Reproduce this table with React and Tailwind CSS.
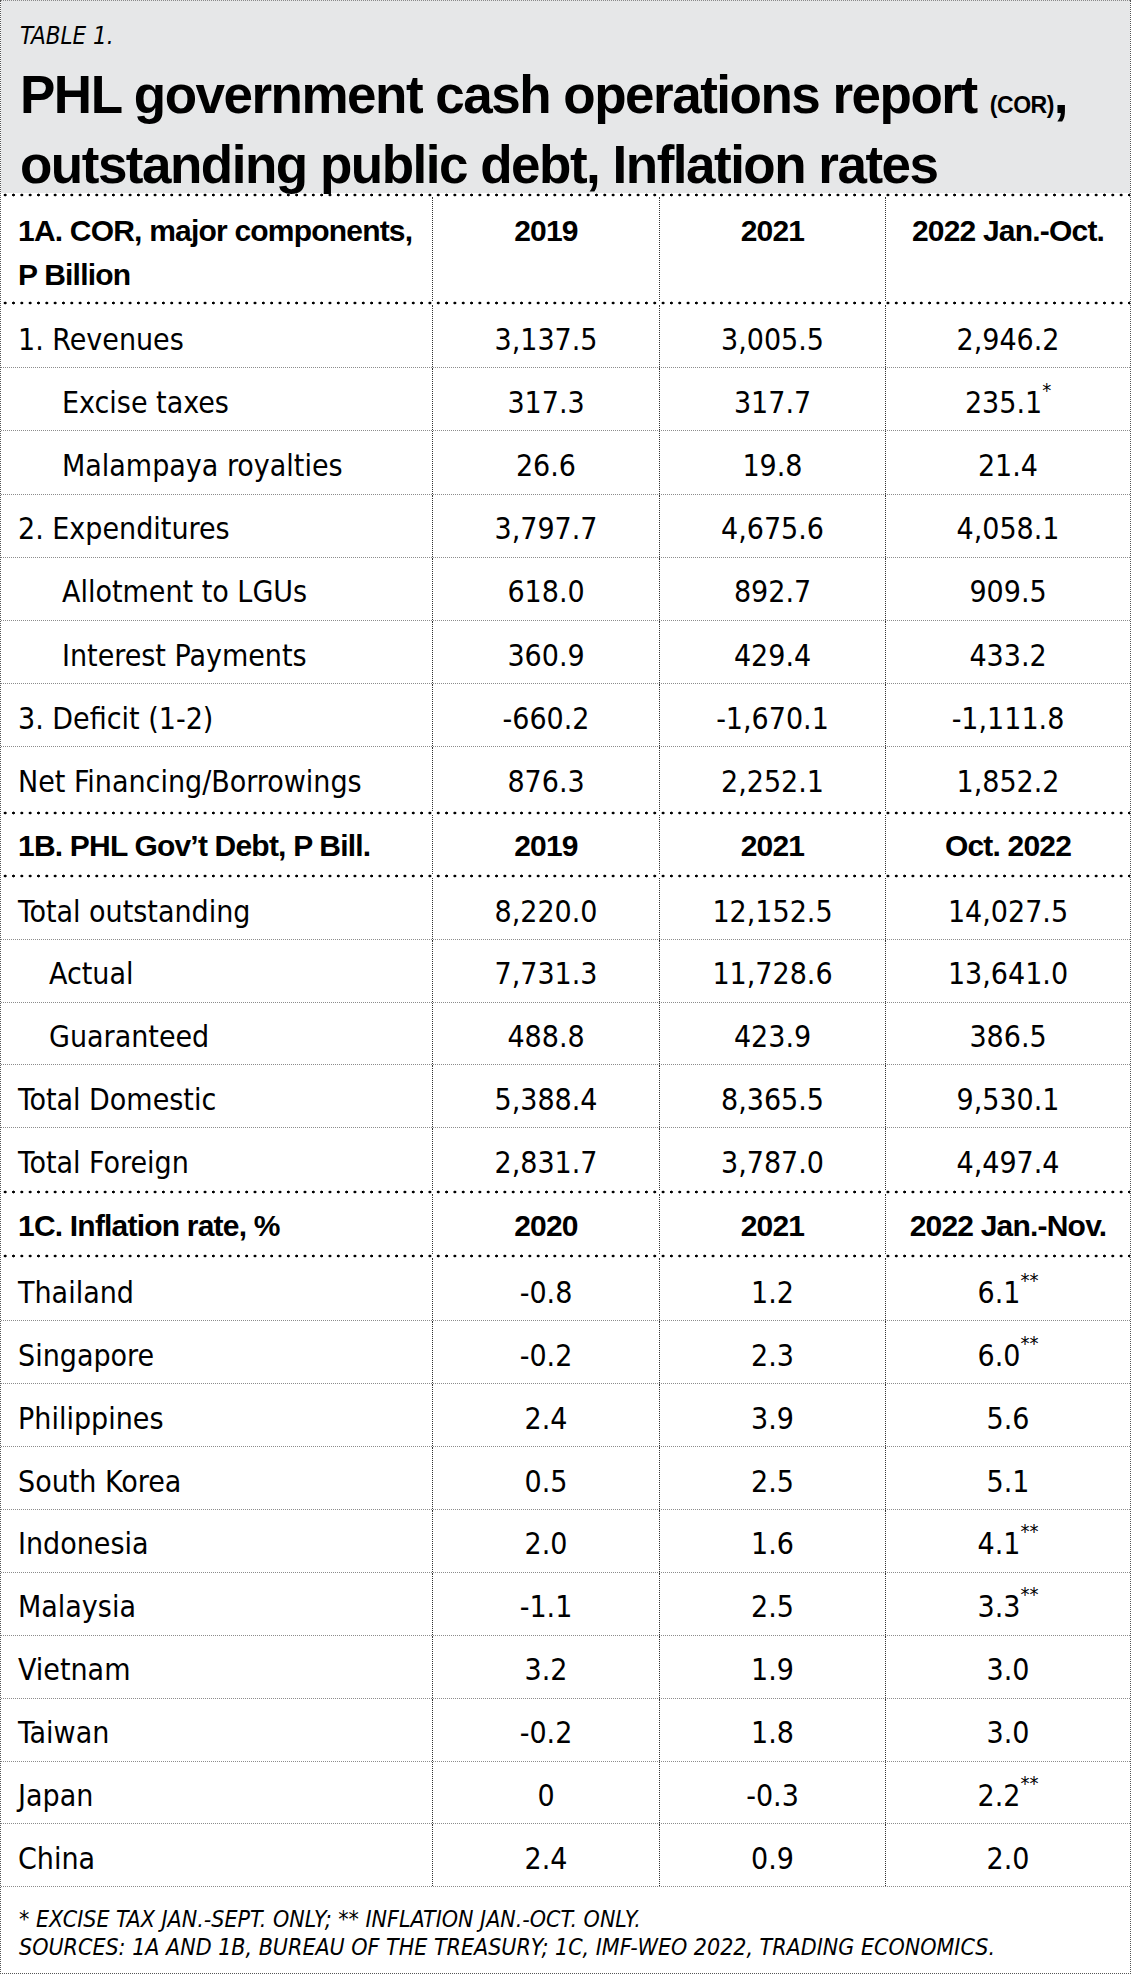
import React from 'react';

const bodyFont = { fontFamily: '"DejaVu Sans Condensed", "Liberation Sans", sans-serif' };
const boldFont = { fontFamily: '"Liberation Sans", Arial, sans-serif' };

const sectionA = [
  { label: '1. Revenues', values: ['3,137.5', '3,005.5', '2,946.2'] },
  { label: 'Excise taxes', indent: 'pl-[61px]', values: ['317.3', '317.7', '235.1*'] },
  { label: 'Malampaya royalties', indent: 'pl-[61px]', values: ['26.6', '19.8', '21.4'] },
  { label: '2. Expenditures', values: ['3,797.7', '4,675.6', '4,058.1'] },
  { label: 'Allotment to LGUs', indent: 'pl-[61px]', values: ['618.0', '892.7', '909.5'] },
  { label: 'Interest Payments', indent: 'pl-[61px]', values: ['360.9', '429.4', '433.2'] },
  { label: '3. Deficit (1-2)', values: ['-660.2', '-1,670.1', '-1,111.8'] },
  { label: 'Net Financing/Borrowings', values: ['876.3', '2,252.1', '1,852.2'] }
];

const sectionB = [
  { label: 'Total outstanding', values: ['8,220.0', '12,152.5', '14,027.5'] },
  { label: 'Actual', indent: 'pl-[48px]', values: ['7,731.3', '11,728.6', '13,641.0'] },
  { label: 'Guaranteed', indent: 'pl-[48px]', values: ['488.8', '423.9', '386.5'] },
  { label: 'Total Domestic', values: ['5,388.4', '8,365.5', '9,530.1'] },
  { label: 'Total Foreign', values: ['2,831.7', '3,787.0', '4,497.4'] }
];

const sectionC = [
  { label: 'Thailand', values: ['-0.8', '1.2', '6.1**'] },
  { label: 'Singapore', values: ['-0.2', '2.3', '6.0**'] },
  { label: 'Philippines', values: ['2.4', '3.9', '5.6'] },
  { label: 'South Korea', values: ['0.5', '2.5', '5.1'] },
  { label: 'Indonesia', values: ['2.0', '1.6', '4.1**'] },
  { label: 'Malaysia', values: ['-1.1', '2.5', '3.3**'] },
  { label: 'Vietnam', values: ['3.2', '1.9', '3.0'] },
  { label: 'Taiwan', values: ['-0.2', '1.8', '3.0'] },
  { label: 'Japan', values: ['0', '-0.3', '2.2**'] },
  { label: 'China', values: ['2.4', '0.9', '2.0'] }
];

function HeavyRule() {
  return (
    <div className="h-[4px] w-full bg-[radial-gradient(circle,#000_1.2px,transparent_1.7px)] bg-[length:8.33px_4px] bg-repeat-x" />
  );
}

function Value({ text }) {
  const stars = text.match(/\*+$/);
  const num = stars ? text.slice(0, -stars[0].length) : text;
  return (
    <span>
      {num}
      {stars && <span className="align-top text-[20px] leading-none">{stars[0]}</span>}
    </span>
  );
}

function DataRow({ row, height, border }) {
  return (
    <div
      className={`grid grid-cols-[431px_227px_226px_1fr] ${height} text-[30px] text-black ${
        border ? 'border-b border-dotted border-[#8c8c8c]' : ''
      }`}
    >
      <div className={`flex items-center pt-[6px] ${row.indent || 'pl-[17px]'}`}>{row.label}</div>
      {row.values.map((v, i) => (
        <div key={i} className="flex items-center justify-center pt-[6px] border-l border-dotted border-[#333]">
          <Value text={v} />
        </div>
      ))}
    </div>
  );
}

function HeaderRow({ label, cols, height }) {
  return (
    <div
      className={`grid grid-cols-[431px_227px_226px_1fr] ${height} text-[30px] font-bold tracking-[-0.8px] text-black`}
      style={boldFont}
    >
      <div className="flex items-center pl-[17px] pt-[2px]">{label}</div>
      {cols.map((c) => (
        <div key={c} className="flex items-center justify-center pt-[2px] border-l border-dotted border-[#333]">
          {c}
        </div>
      ))}
    </div>
  );
}

function Section({ rows, height, lastBorder }) {
  return rows.map((r, i) => (
    <DataRow key={r.label} row={r} height={height} border={i < rows.length - 1 || lastBorder} />
  ));
}

export default function App() {
  return (
    <div className="w-[1131px] bg-white" style={bodyFont}>
      <div className="border-l border-r border-b border-dotted border-[#555]">
        {/* title block */}
        <div className="h-[193px] bg-[#e6e7e8] border-t border-dotted border-[#888] pl-[19px] pt-[21px]">
          <div className="text-[24px] italic leading-[28px] text-black">TABLE 1.</div>
          <div
            className="text-[53px] font-bold leading-[60px] tracking-[-1.5px] text-black mt-[15px]"
            style={boldFont}
          >
            PHL government cash operations report <span className="text-[23px] tracking-[-0.5px]">(COR)</span>,
            <br />
            outstanding public debt, Inflation rates
          </div>
        </div>
        <HeavyRule />

        {/* 1A */}
        <div
          className="grid grid-cols-[431px_227px_226px_1fr] h-[104px] text-[30px] font-bold leading-[44px] tracking-[-0.8px] text-black"
          style={boldFont}
        >
          <div className="pl-[17px] pt-[12px]">
            1A. COR, major components,
            <br />
            P Billion
          </div>
          <div className="text-center pt-[12px] border-l border-dotted border-[#333]">2019</div>
          <div className="text-center pt-[12px] border-l border-dotted border-[#333]">2021</div>
          <div className="text-center pt-[12px] border-l border-dotted border-[#333]">2022 Jan.-Oct.</div>
        </div>
        <HeavyRule />
        <Section rows={sectionA} height="h-[63.2px]" lastBorder={false} />
        <HeavyRule />

        {/* 1B */}
        <HeaderRow label="1B. PHL Gov’t Debt, P Bill." cols={['2019', '2021', 'Oct. 2022']} height="h-[59px]" />
        <HeavyRule />
        <Section rows={sectionB} height="h-[62.6px]" lastBorder={false} />
        <HeavyRule />

        {/* 1C */}
        <HeaderRow label="1C. Inflation rate, %" cols={['2020', '2021', '2022 Jan.-Nov.']} height="h-[60px]" />
        <HeavyRule />
        <Section rows={sectionC} height="h-[62.9px]" lastBorder={true} />

        {/* notes */}
        <div className="pl-[18px] pt-[18px] pb-[12px] text-[23px] italic uppercase leading-[28px] text-black">
          <div>* Excise tax Jan.-Sept. only; ** Inflation Jan.-Oct. only.</div>
          <div>Sources: 1A and 1B, Bureau of the Treasury; 1C, IMF-WEO 2022, Trading Economics.</div>
        </div>
      </div>
    </div>
  );
}
